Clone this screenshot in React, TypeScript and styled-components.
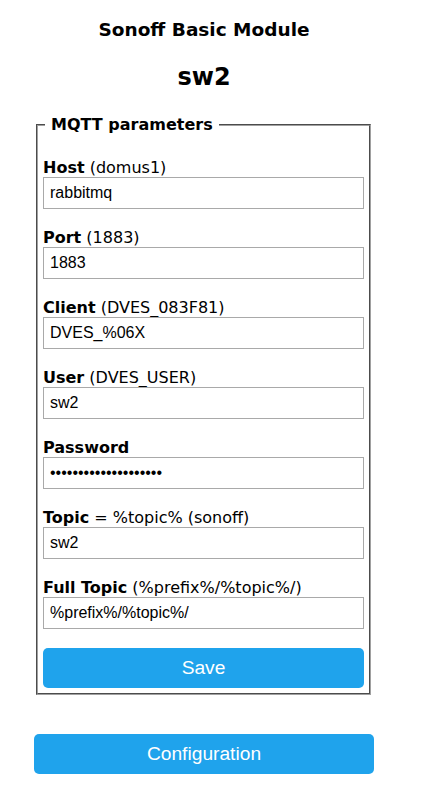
import React, { FC } from 'react'
import styled, { createGlobalStyle } from 'styled-components'

const GlobalStyle = createGlobalStyle`
	html, body {
		margin: 0;
		padding: 0;
		background: #fff;
	}
	body {
		font-family: "DejaVu Sans", Verdana, sans-serif;
		color: #000;
	}
`

const Page = styled.div`
	display: flex;
	justify-content: flex-start;
	padding: 19px 0 8px 34px;
`

const Main = styled.div`
	width: 340px;
	display: flex;
	flex-direction: column;
`

const Title = styled.h3`
	margin: 0;
	text-align: center;
	font-size: 18.5px;
	line-height: 22px;
	font-weight: bold;
`

const DeviceName = styled.h2`
	margin: 22px 0 0 0;
	text-align: center;
	font-size: 24px;
	line-height: 28px;
	font-weight: bold;
`

const Fieldset = styled.fieldset`
	margin: 24px 3px 0 2px;
	padding: 5px 5px 5px 5px;
	border: 2px groove #a0a0a0;
	min-width: 0;
`

const Legend = styled.legend`
	padding: 0 6px;
	margin-left: 2px;
	font-size: 16px;
	line-height: 19px;
	font-weight: bold;
`

const Field = styled.div`
	display: flex;
	flex-direction: column;
	margin-top: 19px;
`

const Label = styled.div`
	font-size: 16px;
	line-height: 19px;
	white-space: nowrap;
`

const Input = styled.input`
	box-sizing: border-box;
	width: 100%;
	height: 32px;
	margin: 0;
	padding: 5px 6px;
	border: 1px solid #a9a9a9;
	border-radius: 0;
	font-family: "Liberation Sans", Arial, sans-serif;
	font-size: 16px;
	color: #000;
	background: #fff;
	outline: none;
`

const Button = styled.button<{ $top?: number }>`
	box-sizing: border-box;
	width: 100%;
	height: 40px;
	margin: ${(p) => p.$top ?? 0}px 0 0 0;
	border: 0;
	border-radius: 5px;
	background-color: #1fa3ec;
	color: #fff;
	font-family: "Liberation Sans", Arial, sans-serif;
	font-size: 19.2px;
	line-height: 40px;
	padding: 0;
	cursor: pointer;
`

type FieldDef = {
	name: string
	hint: string
	value: string
	password?: boolean
}

const fields: FieldDef[] = [
	{ name: 'Host', hint: ' (domus1)', value: 'rabbitmq' },
	{ name: 'Port', hint: ' (1883)', value: '1883' },
	{ name: 'Client', hint: ' (DVES_083F81)', value: 'DVES_%06X' },
	{ name: 'User', hint: ' (DVES_USER)', value: 'sw2' },
	{ name: 'Password', hint: '', value: 'xxxxxxxxxxxxxxxxxxxx', password: true },
	{ name: 'Topic', hint: ' = %topic% (sonoff)', value: 'sw2' },
	{ name: 'Full Topic', hint: ' (%prefix%/%topic%/)', value: '%prefix%/%topic%/' },
]

const App: FC = () => {
	return (
		<>
			<GlobalStyle />
			<Page>
				<Main>
					<Title>Sonoff Basic Module</Title>
					<DeviceName>sw2</DeviceName>
					<Fieldset>
						<Legend>MQTT parameters</Legend>
						{fields.map((f) => (
							<Field key={f.name}>
								<Label>
									<b>{f.name}</b>
									{f.hint}
								</Label>
								<Input
									type={f.password ? 'password' : 'text'}
									defaultValue={f.value}
								/>
							</Field>
						))}
						<Button $top={19}>Save</Button>
					</Fieldset>
					<Button $top={39}>Configuration</Button>
				</Main>
			</Page>
		</>
	)
}

export default App
